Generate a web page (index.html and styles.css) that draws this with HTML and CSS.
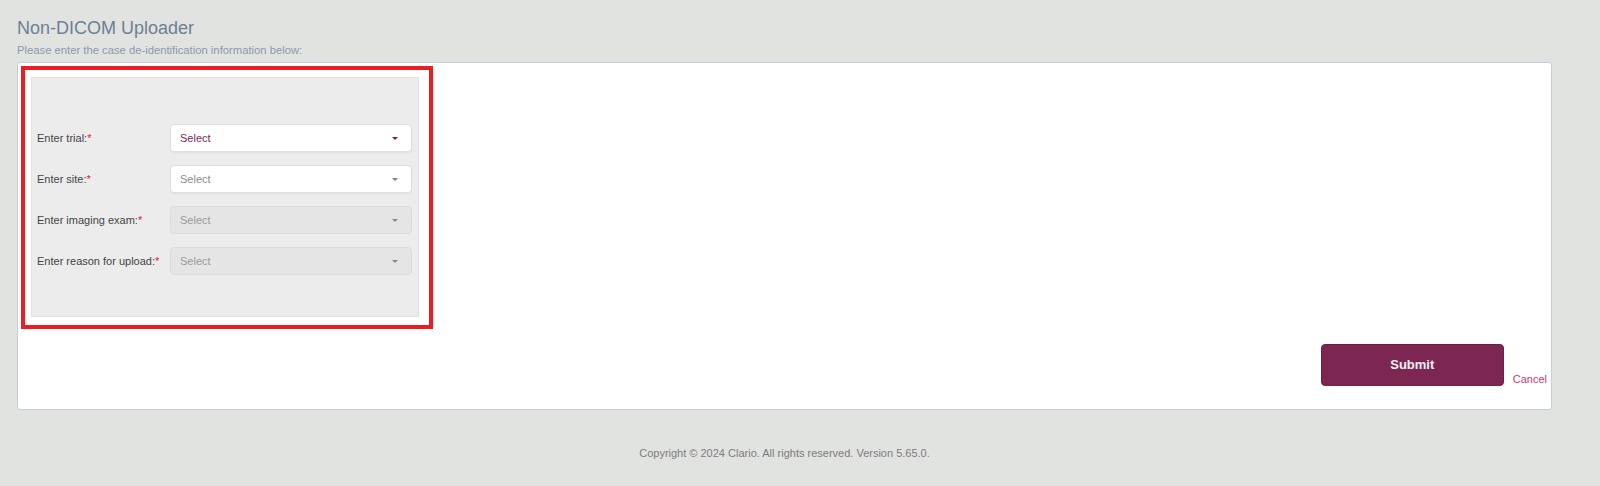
FILE: index.html
```html
<!DOCTYPE html>
<html>
<head>
    <title>Non-DICOM Uploader</title>
    <link rel="stylesheet" href="styles.css">
</head>
<body>
    <div class="page">
        <h1 class="pageTitle">Non-DICOM Uploader</h1>
        <div class="pageHint">Please enter the case de-identification information below:</div>

        <div class="card">
            <div class="highlight">
                <div class="formPanel">

                    <div class="formRow">
                        <label class="fieldLabel">Enter trial:<span class="req">*</span></label>
                        <div class="selectBox active">
                            <span class="selectText">Select</span>
                            <span class="caret"></span>
                        </div>
                    </div>

                    <div class="formRow">
                        <label class="fieldLabel">Enter site:<span class="req">*</span></label>
                        <div class="selectBox">
                            <span class="selectText">Select</span>
                            <span class="caret"></span>
                        </div>
                    </div>

                    <div class="formRow">
                        <label class="fieldLabel">Enter imaging exam:<span class="req">*</span></label>
                        <div class="selectBox disabled">
                            <span class="selectText">Select</span>
                            <span class="caret"></span>
                        </div>
                    </div>

                    <div class="formRow">
                        <label class="fieldLabel">Enter reason for upload:<span class="req">*</span></label>
                        <div class="selectBox disabled">
                            <span class="selectText">Select</span>
                            <span class="caret"></span>
                        </div>
                    </div>

                </div>
            </div>

            <div class="actions">
                <button class="submitButton">Submit</button>
                <a class="cancelLink" href="#">Cancel</a>
            </div>
        </div>

        <div class="footer">Copyright &copy; 2024 Clario. All rights reserved. Version 5.65.0.</div>
    </div>
</body>
</html>
```

FILE: styles.css
```css
body {
	margin: 0;
	background-color: #e1e3e0;
	font-family: "Liberation Sans", Arial, sans-serif;
}

.page {
	padding: 17px 48px 0 17px;
}

.pageTitle {
	margin: 0;
	font-size: 18px;
	line-height: 22px;
	font-weight: normal;
	color: #6e7f96;
}

.pageHint {
	margin-top: 5px;
	font-size: 11.25px;
	line-height: 13px;
	color: #8a9aae;
}

.card {
	margin-top: 5px;
	background-color: #ffffff;
	border: 1px solid #c9cdd6;
	border-radius: 3px;
	padding: 3px 4px 23px 3px;
}

.highlight {
	width: 388px;
	height: 240px;
	border: 4px solid #ec1c24;
	padding: 7px 10px 8px 6px;
	box-sizing: content-box;
	display: flex;
}

.formPanel {
	flex: 1;
	background-color: #ececec;
	border: 1px solid #e2e2e2;
	padding: 46px 6px 0 5px;
	display: flex;
	flex-direction: column;
	gap: 13px;
	box-sizing: border-box;
	height: 240px;
}

.formRow {
	display: flex;
	align-items: center;
	height: 28px;
}

.fieldLabel {
	width: 133px;
	font-size: 11px;
	color: #444444;
}

.req {
	color: #e0202a;
}

.selectBox {
	width: 242px;
	height: 28px;
	box-sizing: border-box;
	background-color: #ffffff;
	border: 1px solid #dedfe2;
	border-radius: 4px;
	box-shadow: 0 1px 2px rgba(0, 0, 0, 0.05);
	display: flex;
	align-items: center;
	justify-content: space-between;
	padding: 0 13px 0 9px;
}

.selectText {
	font-size: 11px;
	color: #8c8c8c;
}

.caret {
	width: 0;
	height: 0;
	border-left: 3px solid transparent;
	border-right: 3px solid transparent;
	border-top: 3px solid #7d7d7d;
}

.active .selectText {
	color: #7b2a60;
}

.active .caret {
	border-top-color: #7b2050;
}

.disabled {
	background-color: #e5e5e5;
	border-color: #dcdcdc;
	box-shadow: none;
}

.disabled .selectText {
	color: #9a9a9a;
}

.disabled .caret {
	border-top-color: #8a8a8a;
}

.actions {
	margin-top: 15px;
	display: flex;
	justify-content: flex-end;
	align-items: flex-end;
	gap: 9px;
}

.submitButton {
	width: 183px;
	height: 42px;
	background-color: #7c2752;
	border: 1px solid #701e48;
	border-radius: 4px;
	color: #f4eef2;
	font-family: "Liberation Sans", Arial, sans-serif;
	font-size: 13px;
	font-weight: bold;
	padding-bottom: 2px;
}

.cancelLink {
	font-size: 11px;
	color: #d4376e;
	text-decoration: none;
	margin-bottom: 1px;
}

.footer {
	margin-top: 37px;
	text-align: center;
	font-size: 11px;
	line-height: 13px;
	color: #7c7c7c;
}
```
